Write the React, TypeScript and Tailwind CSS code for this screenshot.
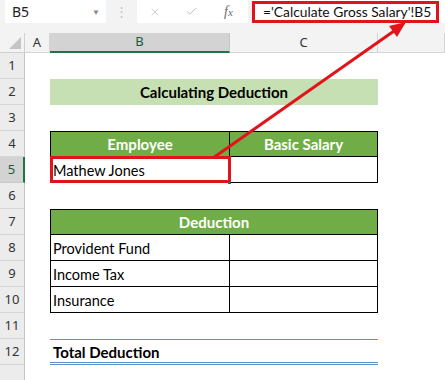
import { Check, X } from "lucide-react";

const ui = { fontFamily: '"Noto Sans", "Open Sans", sans-serif' };
const cell = { fontFamily: 'Lato, "Open Sans", sans-serif' };

const rowNums = [1, 2, 3, 4, 5, 6, 7, 8, 9, 10, 11, 12, 13];

function Toolbar() {
  return (
    <div className="flex h-[23px] bg-[#f3f3f3] pl-[5px]" style={ui}>
      <div className="flex w-[101px] items-center justify-between bg-white pl-[7px] pr-[6px] text-[14px] text-[#222]">
        <span>B5</span>
        <span className="text-[8px] text-[#888]">▼</span>
      </div>
      <div className="flex w-[31px] items-center justify-center text-[13px] text-[#c2c2c2]">⋮</div>
      <div className="flex w-[111px] items-center bg-white">
        <X className="ml-[12px] h-[12px] w-[12px] text-[#bdbdbd]" strokeWidth={1.5} />
        <Check className="ml-[24px] h-[13px] w-[13px] text-[#bdbdbd]" strokeWidth={1.8} />
        <span
          className="ml-[26px] text-[14px] italic text-[#6b6b6b]"
          style={{ fontFamily: '"Liberation Serif", serif' }}
        >
          f<span className="text-[11px]">x</span>
        </span>
      </div>
      <div className="ml-[4px] flex flex-1 bg-white pr-[6px] pt-px">
        <div
          style={cell}
          className="flex flex-1 items-center whitespace-nowrap border-[3px] border-[#e2141b] pl-[8px] text-[13.8px] leading-none text-[#111]"
        >
          ='Calculate Gross Salary'!B5
        </div>
      </div>
    </div>
  );
}

export default function App() {
  return (
    <div className="relative h-[380px] w-[445px] overflow-hidden bg-white">
      <Toolbar />
      <div className="h-[10px] bg-[#f3f3f3]" />

      <div className="grid grid-cols-[25px_25px_180px_148px_1fr] grid-rows-[20px_repeat(13,26px)]">
        {/* column headers */}
        <div className="relative border-b border-r border-[#d0d0d0] bg-[#f3f3f3]">
          <div className="absolute bottom-[3px] right-[3px] h-0 w-0 border-b-[12px] border-l-[12px] border-b-[#c4c4c4] border-l-transparent" />
        </div>
        {["A", "B", "C", ""].map((c) => (
          <div
            key={c}
            style={ui}
            className={
              c === "B"
                ? "flex items-center justify-center border-b-2 border-r border-b-[#217346] border-r-[#c6c6c6] bg-[#d3d3d3] text-[13px] text-[#1e5c36]"
                : "flex items-center justify-center border-b border-r border-[#d4d4d4] bg-[#f3f3f3] text-[13px] text-[#333]"
            }
          >
            {c}
          </div>
        ))}

        {/* row headers */}
        {rowNums.map((n) => (
          <div
            key={n}
            style={{ ...ui, gridColumnStart: 1, gridRowStart: n + 1 }}
            className={
              n === 5
                ? "flex items-center justify-center border-b border-r-2 border-b-[#c8c8c8] border-r-[#217346] bg-[#d3d3d3] text-[13px] text-[#1e5c36]"
                : "flex items-center justify-center border-b border-r border-b-[#d6d6d6] border-r-[#c4c4c4] bg-[#ececec] text-[13px] text-[#333]"
            }
          >
            {n === 13 ? "" : n}
          </div>
        ))}

        {/* title */}
        <div
          style={cell}
          className="col-span-2 col-start-3 row-start-3 flex items-center justify-center bg-[#c6e0b4] text-[15px] font-bold text-black"
        >
          Calculating Deduction
        </div>

        {/* employee table */}
        <div
          style={cell}
          className="col-span-2 col-start-3 row-span-2 row-start-5 grid grid-cols-[179px_148px] grid-rows-[25px_26px] border-l border-t border-black text-[14.5px]"
        >
          <div className="flex items-center justify-center border-b border-r border-black bg-[#70ad47] text-[15px] font-bold text-white">
            Employee
          </div>
          <div className="flex items-center justify-center border-b border-r border-black bg-[#70ad47] text-[15px] font-bold text-white">
            Basic Salary
          </div>
          <div className="relative flex items-center border-b border-r border-black pl-[2px] pt-[3px] text-black">
            Mathew Jones
            <div className="absolute -left-px -top-px h-[27px] w-[181px] border-[3px] border-[#e2141b]" />
            <div className="absolute -bottom-[2px] -right-[2px] h-[3px] w-[3px] bg-[#217346]" />
          </div>
          <div className="border-b border-r border-black" />
        </div>

        {/* deduction table */}
        <div
          style={cell}
          className="col-span-2 col-start-3 row-span-4 row-start-8 grid grid-cols-[179px_148px] grid-rows-[25px_26px_26px_26px] border-l border-t border-black text-[14.5px]"
        >
          <div className="col-span-2 flex items-center justify-center border-b border-r border-black bg-[#70ad47] text-[15px] font-bold text-white">
            Deduction
          </div>
          {["Provident Fund", "Income Tax", "Insurance"].map((t) => (
            <div key={t} className="contents">
              <div className="flex items-center border-b border-r border-black pl-[2px] pt-[3px] text-black">{t}</div>
              <div className="border-b border-r border-black" />
            </div>
          ))}
        </div>

        {/* total */}
        <div
          style={cell}
          className="col-span-2 col-start-3 row-start-13 flex items-center border-b-[3px] border-t border-double border-[#5e92c8] pl-[3px] pt-[2px] text-[15px] font-bold text-black"
        >
          Total Deduction
        </div>
      </div>

      {/* arrow from B5 to the formula */}
      <svg className="pointer-events-none absolute left-0 top-0" width="445" height="380">
        <line x1="213" y1="158" x2="394" y2="31" stroke="#e2141b" strokeWidth="3" />
        <polygon points="406,22 397,37 389,26" fill="#e2141b" />
      </svg>
    </div>
  );
}
